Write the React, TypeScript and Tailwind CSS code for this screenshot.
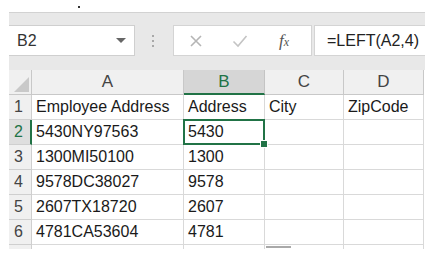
import React from 'react'

const rows: Array<[string, string, string, string]> = [
  ['Employee Address', 'Address', 'City', 'ZipCode'],
  ['5430NY97563', '5430', '', ''],
  ['1300MI50100', '1300', '', ''],
  ['9578DC38027', '9578', '', ''],
  ['2607TX18720', '2607', '', ''],
  ['4781CA53604', '4781', '', ''],
]

const cols = ['A', 'B', 'C', 'D']

function CloseIcon() {
  return (
    <svg width="14" height="14" viewBox="0 0 14 14">
      <path d="M2 2 L12 12 M12 2 L2 12" stroke="#b5b5b5" strokeWidth="1.6" fill="none" />
    </svg>
  )
}

function CheckIcon() {
  return (
    <svg width="16" height="14" viewBox="0 0 16 14">
      <path d="M1.5 7.5 L6 12 L14.5 2" stroke="#c4c4c4" strokeWidth="1.6" fill="none" />
    </svg>
  )
}

export default function App() {
  return (
    <div className="w-[435px] h-[260px] bg-white overflow-hidden font-['Liberation_Sans',Arial,sans-serif]">
      {/* stray dot above the ribbon */}
      <div className="h-[12px] pl-[78px] pt-[6px]">
        <div className="w-[2px] h-[2px] bg-[#333]" />
      </div>

      {/* formula bar */}
      <div className="ml-[9px] w-[416px] h-[58px] bg-[#e8e8e8] border-t border-[#d2d2d2] pt-[12px] flex items-start">
        <div className="w-[126px] h-[31px] bg-white border border-[#cfcfcf] border-l-0 flex items-center justify-between pl-[8px] pr-[8px]">
          <span className="text-[16px] text-[#333]">B2</span>
          <svg width="10" height="6" viewBox="0 0 10 6">
            <path d="M0 0 L10 0 L5 5 Z" fill="#666" />
          </svg>
        </div>
        <div className="ml-[17px] mt-[10px] flex flex-col gap-[3px]">
          <div className="w-[2px] h-[2px] bg-[#a8a8a8]" />
          <div className="w-[2px] h-[2px] bg-[#a8a8a8]" />
          <div className="w-[2px] h-[2px] bg-[#a8a8a8]" />
        </div>
        <div className="ml-[19px] w-[139px] h-[31px] bg-white border border-[#d4d4d4] flex items-center">
          <div className="ml-[15px]">
            <CloseIcon />
          </div>
          <div className="ml-[29px]">
            <CheckIcon />
          </div>
          <div className="ml-[31px] font-['Liberation_Serif',serif] italic text-[#555] leading-none">
            <span className="text-[17px]">f</span>
            <span className="text-[12px]">x</span>
          </div>
        </div>
        <div className="ml-[2px] flex-1 h-[31px] bg-white border border-[#d4d4d4] border-r-0 flex items-center pl-[12px]">
          <span className="text-[16px] text-[#222]">=LEFT(A2,4)</span>
        </div>
      </div>

      {/* sheet grid */}
      <div className="ml-[9px] grid grid-cols-[23px_152px_81px_79px_80px] text-[16px] text-[#1a1a1a]">
        {/* header row */}
        <div className="h-[25px] bg-[#f0f0f0] border-r border-b border-[#c8c8c8] relative">
          <svg className="absolute right-[2px] bottom-[2px]" width="15" height="15" viewBox="0 0 15 15">
            <path d="M15 0 L15 15 L0 15 Z" fill="#c9c9c9" />
          </svg>
        </div>
        {cols.map((c) => (
          <div
            key={c}
            className={
              c === 'B'
                ? 'h-[25px] bg-[#d6d6d6] border-r border-[#c4c4c4] border-b-2 border-b-[#217346] flex items-center justify-center text-[17px] text-[#217346]'
                : 'h-[25px] bg-[#f0f0f0] border-r border-b border-[#c8c8c8] flex items-center justify-center text-[17px] text-[#444]'
            }
          >
            {c}
          </div>
        ))}

        {/* data rows */}
        {rows.map((r, i) => {
          const n = i + 1
          const sel = n === 2
          return (
            <React.Fragment key={n}>
              <div
                className={
                  sel
                    ? 'h-[25px] bg-[#dedede] border-r-2 border-r-[#217346] border-b border-[#cfcfcf] flex items-center pl-[5px] text-[#217346]'
                    : 'h-[25px] bg-[#f0f0f0] border-r border-b border-[#cfcfcf] flex items-center pl-[5px] text-[#444]'
                }
              >
                {n}
              </div>
              {r.map((v, j) => (
                <div
                  key={j}
                  className="h-[25px] border-r border-b border-[#d9d9d9] flex items-center pl-[4px] whitespace-nowrap relative"
                >
                  {v}
                  {sel && j === 1 && (
                    <div className="absolute z-10 -left-[1px] -top-[1px] -right-[1px] -bottom-[1px] border-2 border-[#217346]">
                      <div className="absolute -right-[5px] -bottom-[5px] w-[8px] h-[8px] bg-[#217346] border border-white" />
                    </div>
                  )}
                </div>
              ))}
            </React.Fragment>
          )
        })}

        {/* partial row 7 */}
        <div className="h-[4px] bg-[#f0f0f0] border-r border-[#cfcfcf]" />
        <div className="h-[4px] border-r border-[#d9d9d9]" />
        <div className="h-[4px] border-r border-[#d9d9d9]" />
        <div className="h-[4px] border-r border-[#d9d9d9] pl-[1px] pt-[1px]">
          <div className="w-[25px] h-[2px] bg-[#a9a9a9]" />
        </div>
        <div className="h-[4px] border-r border-[#d9d9d9]" />
      </div>
    </div>
  )
}
